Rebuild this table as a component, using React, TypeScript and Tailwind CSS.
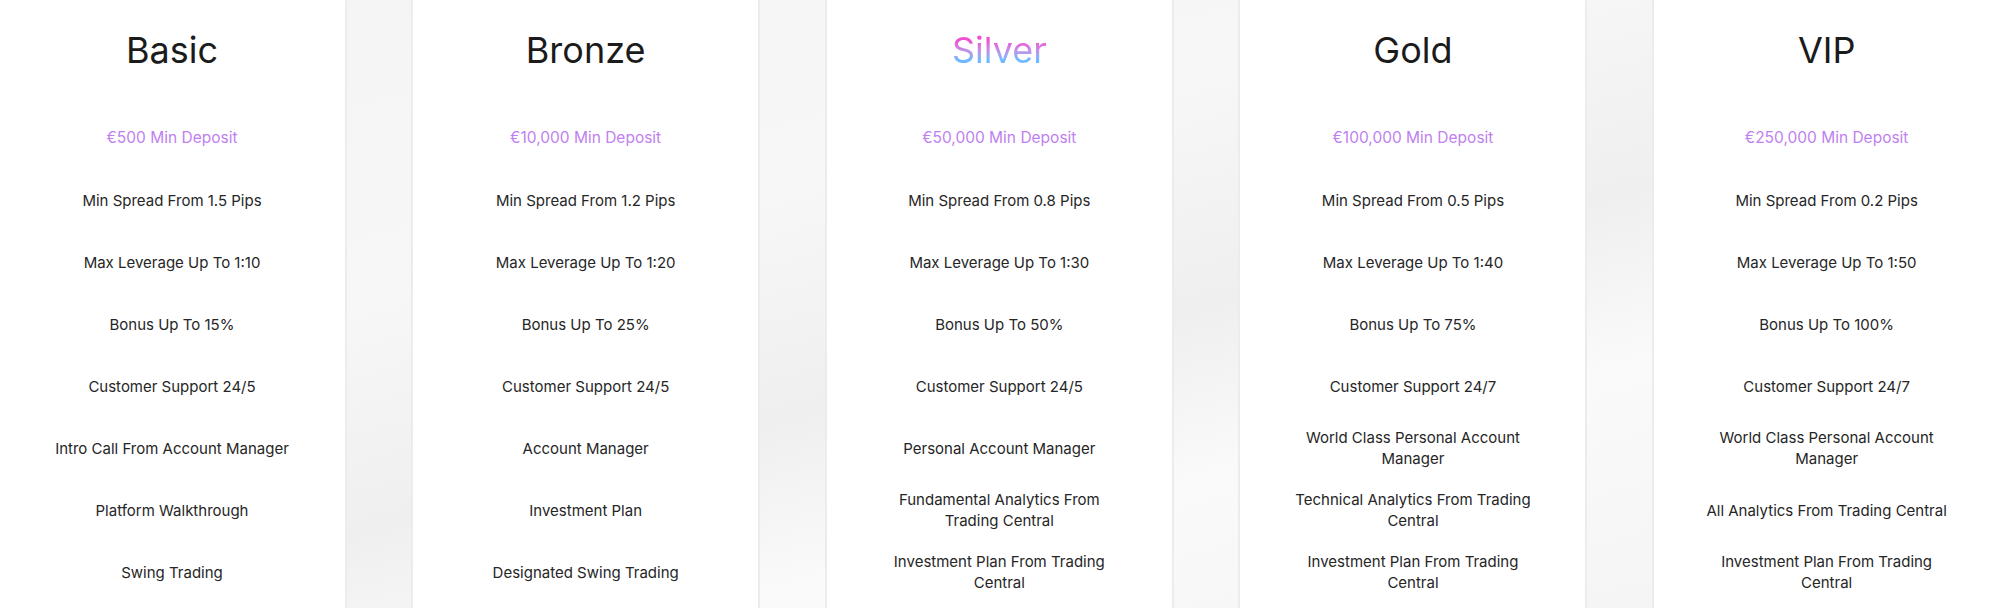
import React from "react";

type Plan = {
  name: string;
  deposit: string;
  features: string[];
  gradient?: boolean;
};

const plans: Plan[] = [
  {
    name: "Basic",
    deposit: "€500 Min Deposit",
    features: [
      "Min Spread From 1.5 Pips",
      "Max Leverage Up To 1:10",
      "Bonus Up To 15%",
      "Customer Support 24/5",
      "Intro Call From Account Manager",
      "Platform Walkthrough",
      "Swing Trading",
    ],
  },
  {
    name: "Bronze",
    deposit: "€10,000 Min Deposit",
    features: [
      "Min Spread From 1.2 Pips",
      "Max Leverage Up To 1:20",
      "Bonus Up To 25%",
      "Customer Support 24/5",
      "Account Manager",
      "Investment Plan",
      "Designated Swing Trading",
    ],
  },
  {
    name: "Silver",
    deposit: "€50,000 Min Deposit",
    gradient: true,
    features: [
      "Min Spread From 0.8 Pips",
      "Max Leverage Up To 1:30",
      "Bonus Up To 50%",
      "Customer Support 24/5",
      "Personal Account Manager",
      "Fundamental Analytics From Trading Central",
      "Investment Plan From Trading Central",
    ],
  },
  {
    name: "Gold",
    deposit: "€100,000 Min Deposit",
    features: [
      "Min Spread From 0.5 Pips",
      "Max Leverage Up To 1:40",
      "Bonus Up To 75%",
      "Customer Support 24/7",
      "World Class Personal Account Manager",
      "Technical Analytics From Trading Central",
      "Investment Plan From Trading Central",
    ],
  },
  {
    name: "VIP",
    deposit: "€250,000 Min Deposit",
    features: [
      "Min Spread From 0.2 Pips",
      "Max Leverage Up To 1:50",
      "Bonus Up To 100%",
      "Customer Support 24/7",
      "World Class Personal Account Manager",
      "All Analytics From Trading Central",
      "Investment Plan From Trading Central",
    ],
  },
];

function PlanCard({ plan }: { plan: Plan }) {
  return (
    <section className="w-[349px] h-full shrink-0 bg-white border-x-2 border-[#ececec] flex flex-col items-center">
      <h2
        className={`mt-[28px] text-[36px] leading-[44px] font-normal ${
          plan.gradient
            ? "bg-gradient-to-b from-[#f04fd2] from-30% to-[#6fb9ff] to-72% bg-clip-text text-transparent"
            : "text-[#1b1b1b]"
        }`}
      >
        {plan.name}
      </h2>
      <div className="mt-[35px] w-full flex flex-col">
        <div className="h-[62px] flex items-center justify-center text-[15.5px] text-[#c07ff0]">
          {plan.deposit}
        </div>
        {plan.features.map((f) => (
          <div
            key={f}
            className="h-[62px] flex items-center justify-center px-[44px] text-center text-[15px] leading-[21px] text-[#262626]"
          >
            {f}
          </div>
        ))}
      </div>
    </section>
  );
}

export default function App() {
  return (
    <div
      className="h-[608px] w-[1998px] overflow-hidden bg-[linear-gradient(165deg,#f4f4f4_0%,#f7f7f7_35%,#efefef_55%,#fafafa_70%,#f3f3f3_100%)]"
      style={{ fontFamily: "Inter, 'Liberation Sans', sans-serif" }}
    >
      <div className="flex h-full gap-[64.67px] -ml-[2.5px]">
        {plans.map((p) => (
          <PlanCard key={p.name} plan={p} />
        ))}
      </div>
    </div>
  );
}
